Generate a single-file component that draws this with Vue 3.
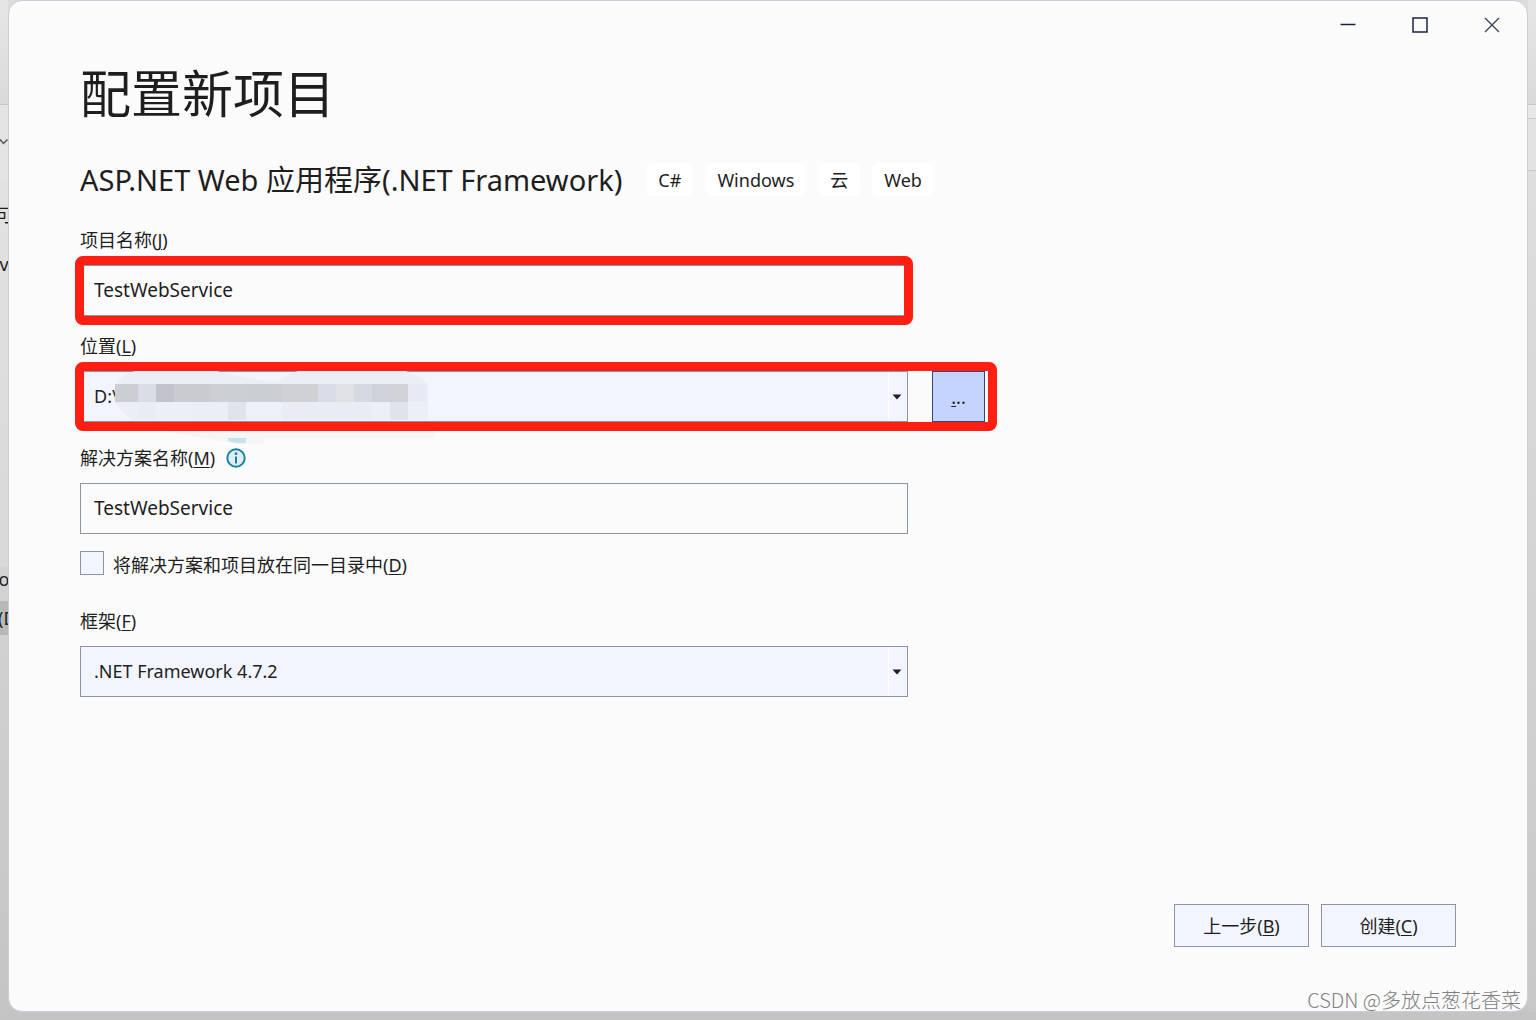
<script setup>
import { ref } from 'vue'

const tags = ['C#', 'Windows', '云', 'Web']
const projectName = ref('TestWebService')
const solutionName = ref('TestWebService')
const location = ref('D:\\')
const framework = ref('.NET Framework 4.7.2')
const sameFolder = ref(false)

const mosaic = [
  [3, 14, 23, '#cdced4'],
  [26, 14, 18, '#dadde6'],
  [44, 14, 18, '#c1c4cd'],
  [62, 14, 36, '#c9cbd0'],
  [98, 14, 36, '#cccfd3'],
  [134, 14, 36, '#cbced2'],
  [170, 14, 36, '#d0d1d4'],
  [206, 14, 18, '#d8dde7'],
  [224, 14, 18, '#dfe1e5'],
  [242, 14, 18, '#d5d9e2'],
  [260, 14, 18, '#cfd2da'],
  [278, 14, 18, '#d0d2d6'],
  [296, 14, 18, '#e6eaf4'],
  [26, 32, 18, '#e9ecf5'],
  [44, 32, 36, '#ebeff8'],
  [80, 32, 36, '#eaeef7'],
  [116, 32, 18, '#e0e3eb'],
  [134, 32, 36, '#edf0f7'],
  [170, 32, 36, '#e9ecf5'],
  [206, 32, 54, '#e8ecf5'],
  [260, 32, 18, '#ebeff8'],
  [278, 32, 18, '#e0e3eb'],
  [296, 32, 18, '#ebeff8']
]
</script>

<template>
  <div class="desktop">
    <aside class="strip left" aria-hidden="true">
      <div class="band top"></div>
      <div class="band toolbar">
        <svg width="8" height="8" viewBox="0 0 8 8"><path d="M0 1.500L3.500 5.500L7.500 1.500" fill="none" stroke="#555" stroke-width="1.500" /></svg>
      </div>
      <div class="band lines">
        <span>可</span>
        <span>v</span>
      </div>
      <div class="band tree">
        <span>o</span>
        <span class="selected">(D</span>
      </div>
    </aside>

    <main class="window">
      <header class="titlebar">
        <button type="button" aria-label="最小化">
          <svg width="18" height="18" viewBox="0 0 18 18"><path d="M1.500 8.500H16.500" stroke="#16263f" stroke-width="1.500" /></svg>
        </button>
        <button type="button" aria-label="最大化">
          <svg width="18" height="18" viewBox="0 0 18 18"><rect x="2" y="2" width="14" height="14" fill="none" stroke="#16263f" stroke-width="1.500" /></svg>
        </button>
        <button type="button" aria-label="关闭">
          <svg width="18" height="18" viewBox="0 0 18 18"><path d="M2 2L16 16M16 2L2 16" stroke="#3a4558" stroke-width="1.400" /></svg>
        </button>
      </header>

      <form class="content" @submit.prevent>
        <h1>配置新项目</h1>

        <div class="template">
          <h2>ASP.NET Web 应用程序(.NET Framework)</h2>
          <ul class="tags">
            <li v-for="tag in tags" :key="tag">{{ tag }}</li>
          </ul>
        </div>

        <div class="field">
          <label for="project">项目名称(<u>J</u>)</label>
          <div class="control marked">
            <input id="project" v-model="projectName" type="text" spellcheck="false" />
          </div>
        </div>

        <div class="field location">
          <label for="location">位置(<u>L</u>)</label>
          <div class="control-row marked">
            <div class="control combo">
              <select id="location" v-model="location">
                <option>D:\</option>
              </select>
              <svg class="arrow" width="10" height="6" viewBox="0 0 10 6"><path d="M0.500 0.500H9.500L5 5.500Z" fill="#1e1e1e" /></svg>
            </div>
            <button type="button" class="browse" aria-label="浏览"><u>.</u>..</button>
            <svg class="smudge" width="330" height="75" viewBox="0 0 330 75" aria-hidden="true">
              <path d="M4 14C10 4 22 0 34 0H100Q150 12 166 12Q178 0 196 0H290Q306 4 316 14V50H20Q4 38 4 28Z" fill="#ebeff5" />
              <rect v-for="(cell, i) in mosaic" :key="i" :x="cell[0]" :y="cell[1]" :width="cell[2]" height="18" :fill="cell[3]" />
              <path d="M48 58H322V68H152V74H125Q80 66 48 60Z" fill="#f4f5f5" />
              <path d="M116 68H134V73H124L116 71Z" fill="#c9e2ea" />
            </svg>
          </div>
        </div>

        <div class="field solution">
          <label for="solution">
            解决方案名称(<u>M</u>)
            <svg class="info" width="20" height="20" viewBox="0 0 20 20">
              <circle cx="10" cy="10" r="8.700" fill="#e3edef" stroke="#1583a5" stroke-width="2" />
              <circle cx="10" cy="5.700" r="1.400" fill="#1583a5" />
              <path d="M10 8.500V15.500" stroke="#1583a5" stroke-width="2" />
            </svg>
          </label>
          <div class="control">
            <input id="solution" v-model="solutionName" type="text" spellcheck="false" />
          </div>
        </div>

        <div class="check">
          <input id="same" v-model="sameFolder" type="checkbox" />
          <label for="same">将解决方案和项目放在同一目录中(<u>D</u>)</label>
        </div>

        <div class="field framework">
          <label for="framework">框架(<u>F</u>)</label>
          <div class="control combo">
            <select id="framework" v-model="framework">
              <option>.NET Framework 4.7.2</option>
            </select>
            <svg class="arrow" width="10" height="6" viewBox="0 0 10 6"><path d="M0.500 0.500H9.500L5 5.500Z" fill="#1e1e1e" /></svg>
          </div>
        </div>

        <footer class="actions">
          <button type="button">上一步(<u>B</u>)</button>
          <button type="submit">创建(<u>C</u>)</button>
        </footer>
      </form>
    </main>

    <aside class="strip right" aria-hidden="true">
      <div class="band top"></div>
      <div class="band gap"></div>
      <div class="band panel"></div>
      <div class="band rest"></div>
    </aside>
    <p class="watermark">CSDN @多放点葱花香菜</p>
  </div>
</template>

<style>
body {
  margin: 0;
}
</style>

<style scoped>
.desktop {
  position: relative;
  display: grid;
  grid-template-columns: 8px minmax(0, 1fr) 8px;
  min-height: 100vh;
  box-sizing: border-box;
  padding-bottom: 8px;
  background: linear-gradient(#dcdcdc, #d2d2d2 60%, #c4c4c4);
  font-family: "Noto Sans", "Noto Sans CJK SC", sans-serif;
  font-size: 18px;
  line-height: 24px;
  color: #1e1e1e;
}

.window {
  display: flex;
  flex-direction: column;
  box-sizing: border-box;
  background: #fbfbfb;
  border: 1px solid #cbcbdc;
  border-radius: 14px;
}

.strip {
  display: flex;
  flex-direction: column;
  overflow: hidden;
}

.band {
  box-sizing: border-box;
}

.top {
  height: 105px;
  border-bottom: 1px solid #c8c8c8;
  background: linear-gradient(#e6e6e6, #dadada);
}

.toolbar {
  height: 76px;
  padding-top: 33px;
  background: #e4e4e4;
}

.toolbar svg {
  display: block;
}

.lines {
  display: flex;
  flex-direction: column;
  gap: 25px;
  height: 386px;
  padding-top: 22px;
  background: linear-gradient(#e2e2e2, #d8d8d8);
}

.left span {
  display: flex;
  justify-content: center;
  height: 24px;
  white-space: nowrap;
}

.tree {
  display: flex;
  flex-direction: column;
  gap: 10px;
}

.left .selected {
  justify-content: flex-start;
  height: 34px;
  margin-left: -2px;
  line-height: 34px;
  background: #b8b8b8;
}

.gap {
  height: 13px;
  background: #e8e8e8;
}

.panel {
  height: 53px;
  border-top: 1px solid #c8c8c8;
  border-bottom: 1px solid #c4c4c4;
  background: #e3e3e3;
}

.rest {
  flex: 1;
  background: linear-gradient(#dedede, #c8c8c8);
}

.titlebar {
  display: flex;
  justify-content: flex-end;
  height: 48px;
  margin-right: -1px;
}

.titlebar button {
  display: grid;
  place-items: center;
  width: 72px;
  padding: 0;
  border: 0;
  background: none;
}

.content {
  display: flex;
  flex: 1;
  flex-direction: column;
  padding: 8px 71px 64px;
}

h1 {
  margin: 0;
  font-size: 51px;
  font-weight: 400;
  line-height: 72px;
}

.template {
  display: flex;
  align-items: center;
  gap: 24px;
  height: 33px;
  margin: 34px 0 32px;
}

h2 {
  margin: 0;
  font-size: 29px;
  font-weight: 400;
  line-height: 33px;
  white-space: nowrap;
}

.tags {
  display: flex;
  gap: 12px;
  margin: 0;
  padding: 0;
  list-style: none;
}

.tags li {
  padding: 2px 12px 0;
  border-radius: 6px;
  background: #fff;
  line-height: 31px;
}

.field {
  display: flex;
  flex-direction: column;
  gap: 13px;
}

.field label {
  display: flex;
  align-items: center;
}

u {
  text-decoration-thickness: 1px;
  text-underline-offset: 2px;
}

.control {
  position: relative;
  width: 100%;
  max-width: 828px;
}

.control input,
.control select {
  display: block;
  box-sizing: border-box;
  width: 100%;
  height: 51px;
  margin: 0;
  padding: 0 13px 2px;
  border: 1px solid #8b95a7;
  border-radius: 0;
  background: #fbfbfb;
  color: #1e1e1e;
  font: inherit;
  outline: none;
  appearance: none;
}

.control input {
  font-size: 19px;
}

.control select {
  background: linear-gradient(#fff, #fff) right 18px top / 1px 100% no-repeat #f2f5fd;
}

.arrow {
  position: absolute;
  top: 23px;
  right: 6px;
}

.control-row {
  position: relative;
  display: grid;
  grid-template-columns: minmax(0, 828px) 53px;
  column-gap: 24px;
  width: fit-content;
}

.location {
  margin-top: 18px;
}

.location .control {
  width: 828px;
  max-width: 100%;
}

.browse {
  padding: 0;
  border: 1px solid #30467d;
  background: #c4d4ff;
  color: #1e1e1e;
  font: inherit;
}

.smudge {
  position: absolute;
  top: -1px;
  left: 32px;
}

.marked::after {
  content: "";
  position: absolute;
  inset: -9px -5px;
  border: 9px solid #ff1e12;
  border-radius: 8px;
  pointer-events: none;
}

.control-row.marked::after {
  right: -12px;
}

.solution {
  margin-top: 24px;
}

.info {
  margin-left: 11px;
}

.check {
  display: flex;
  gap: 9px;
  height: 24px;
  margin: 17px 0 34px;
  line-height: 28px;
}

.check input {
  width: 24px;
  height: 24px;
  margin: 0;
  border: 1px solid #8b95a7;
  background: #f2f5fd;
  appearance: none;
}

.actions {
  display: flex;
  justify-content: flex-end;
  gap: 12px;
  margin-top: auto;
}

.actions button {
  width: 135px;
  height: 43px;
  padding: 0;
  border: 1px solid #8b95a7;
  background: #f2f5fd;
  color: #1e1e1e;
  font: inherit;
}

.watermark {
  position: absolute;
  right: 15px;
  bottom: 8px;
  margin: 0;
  color: #808080;
  font-family: "Noto Sans CJK SC", sans-serif;
  font-size: 20px;
  font-weight: 300;
}
</style>
